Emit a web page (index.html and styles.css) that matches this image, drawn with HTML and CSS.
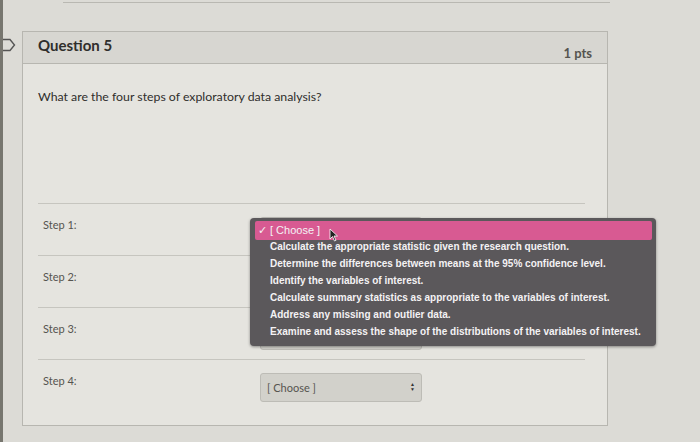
FILE: index.html
```html
<!DOCTYPE html>
<html lang="en">
<head>
    <meta charset="UTF-8">
    <title>Question 5</title>
    <link rel="stylesheet" href="styles.css">
</head>
<body>
    <div class="prev-card"></div>

    <div class="page">
        <!-- флажок вопроса -->
        <div class="flag">
            <svg width="16" height="14" viewBox="0 0 16 14">
                <path d="M0.5 1.5 H10 L14.5 7 L10 12.5 H0.5" fill="none" stroke="#555" stroke-width="1.4"/>
            </svg>
        </div>

        <div class="card">
            <div class="card-header">
                <span class="q-name">Question 5</span>
                <span class="q-pts">1 pts</span>
            </div>

            <div class="card-body">
                <p class="q-text">What are the four steps of exploratory data analysis?</p>

                <div class="step">
                    <div class="step-label">Step 1:</div>
                    <div class="select-wrap open">
                        <div class="select"></div>
                        <!-- открытый список -->
                        <div class="menu">
                            <div class="menu-item active"><span class="check">✓</span>[ Choose ]</div>
                            <div class="menu-item">Calculate the appropriate statistic given the research question.</div>
                            <div class="menu-item">Determine the differences between means at the 95% confidence level.</div>
                            <div class="menu-item">Identify the variables of interest.</div>
                            <div class="menu-item">Calculate summary statistics as appropriate to the variables of interest.</div>
                            <div class="menu-item">Address any missing and outlier data.</div>
                            <div class="menu-item">Examine and assess the shape of the distributions of the variables of interest.</div>
                            <svg class="cursor" width="10" height="14" viewBox="0 0 10 14">
                                <path d="M1 1 L1 11 L3.5 8.5 L5.5 13 L7 12.3 L5 8 L8.5 8 Z" fill="#222" stroke="#fff" stroke-width="0.8"/>
                            </svg>
                        </div>
                    </div>
                </div>

                <div class="step">
                    <div class="step-label">Step 2:</div>
                    <div class="select-wrap">
                        <div class="select"></div>
                    </div>
                </div>

                <div class="step">
                    <div class="step-label">Step 3:</div>
                    <div class="select-wrap">
                        <div class="select"></div>
                    </div>
                </div>

                <div class="step">
                    <div class="step-label">Step 4:</div>
                    <div class="select-wrap">
                        <div class="select">[ Choose ]<span class="arrows">&#9650;<br>&#9660;</span></div>
                    </div>
                </div>
            </div>
        </div>
    </div>
</body>
</html>
```

FILE: styles.css
```css
body {
    margin: 0;
    height: 442px;
    overflow: hidden;
    background-color: #dcdbd6;
    border-left: 3px solid #77766f;
    font-family: Lato, "Open Sans", sans-serif;
    color: #3c3b38;
}

.prev-card {
    margin-left: 60px;
    width: 547px;
    height: 2px;
    border-bottom: 1px solid #b9b8b2;
}

.page {
    display: flex;
    padding-top: 28px;
}

.flag {
    width: 22px;
    padding-top: 5px;
    margin-left: -3px;
}

.card {
    width: 584px;
    height: 393px;
    border: 1px solid #b7b6b0;
    background-color: #e5e4df;
}

.card-header {
    height: 31px;
    display: flex;
    justify-content: space-between;
    padding: 0 15px;
    background-color: #d7d6d1;
    border-bottom: 1px solid #b7b6b0;
}

.q-name {
    font-size: 15px;
    font-weight: 700;
    color: #2f2e2c;
    padding-top: 4px;
}

.q-pts {
    align-self: flex-end;
    font-size: 13px;
    font-weight: 700;
    color: #55544f;
    padding-bottom: 2px;
}

.card-body {
    padding: 25px 22px 0 15px;
}

.q-text {
    margin: 0 0 99px 0;
    font-size: 12.3px;
    color: #2f2e2c;
}

.step {
    display: flex;
    height: 51px;
    border-top: 1px solid #c6c5bf;
}

.step-label {
    width: 217px;
    padding-left: 5px;
    padding-top: 14px;
    font-size: 11px;
    color: #55544f;
}

.select-wrap {
    position: relative;
    padding-top: 13px;
}

.select-wrap.open {
    z-index: 2;
}

.select {
    width: 148px;
    height: 27px;
    line-height: 27px;
    padding-left: 6px;
    padding-right: 6px;
    border: 1px solid #bdbcb6;
    border-radius: 3px;
    background-color: #d2d1cb;
    font-size: 11px;
    color: #55544f;
    display: flex;
    justify-content: space-between;
}

.arrows {
    font-size: 5px;
    line-height: 5px;
    padding-top: 8px;
    color: #333;
}

.menu {
    position: absolute;
    top: 14px;
    left: -10px;
    width: 397px;
    padding: 3px 4px 6px 5px;
    background-color: #5b585b;
    border-radius: 4px;
    box-shadow: 0 1px 3px rgba(0, 0, 0, 0.4);
    font-family: "Liberation Sans", Arial, sans-serif;
    font-size: 10px;
    font-weight: 700;
    color: #f4f2f4;
}

.menu-item {
    height: 17px;
    line-height: 17px;
    padding-left: 15px;
    white-space: nowrap;
}

.menu-item.active {
    height: 19px;
    line-height: 19px;
    padding-left: 3px;
    margin-bottom: -2px;
    background-color: #d85a92;
    border-radius: 2px;
    font-weight: 400;
    font-size: 11px;
}

.check {
    margin-right: 3px;
}

.cursor {
    position: absolute;
    top: 10px;
    left: 79px;
}
```
